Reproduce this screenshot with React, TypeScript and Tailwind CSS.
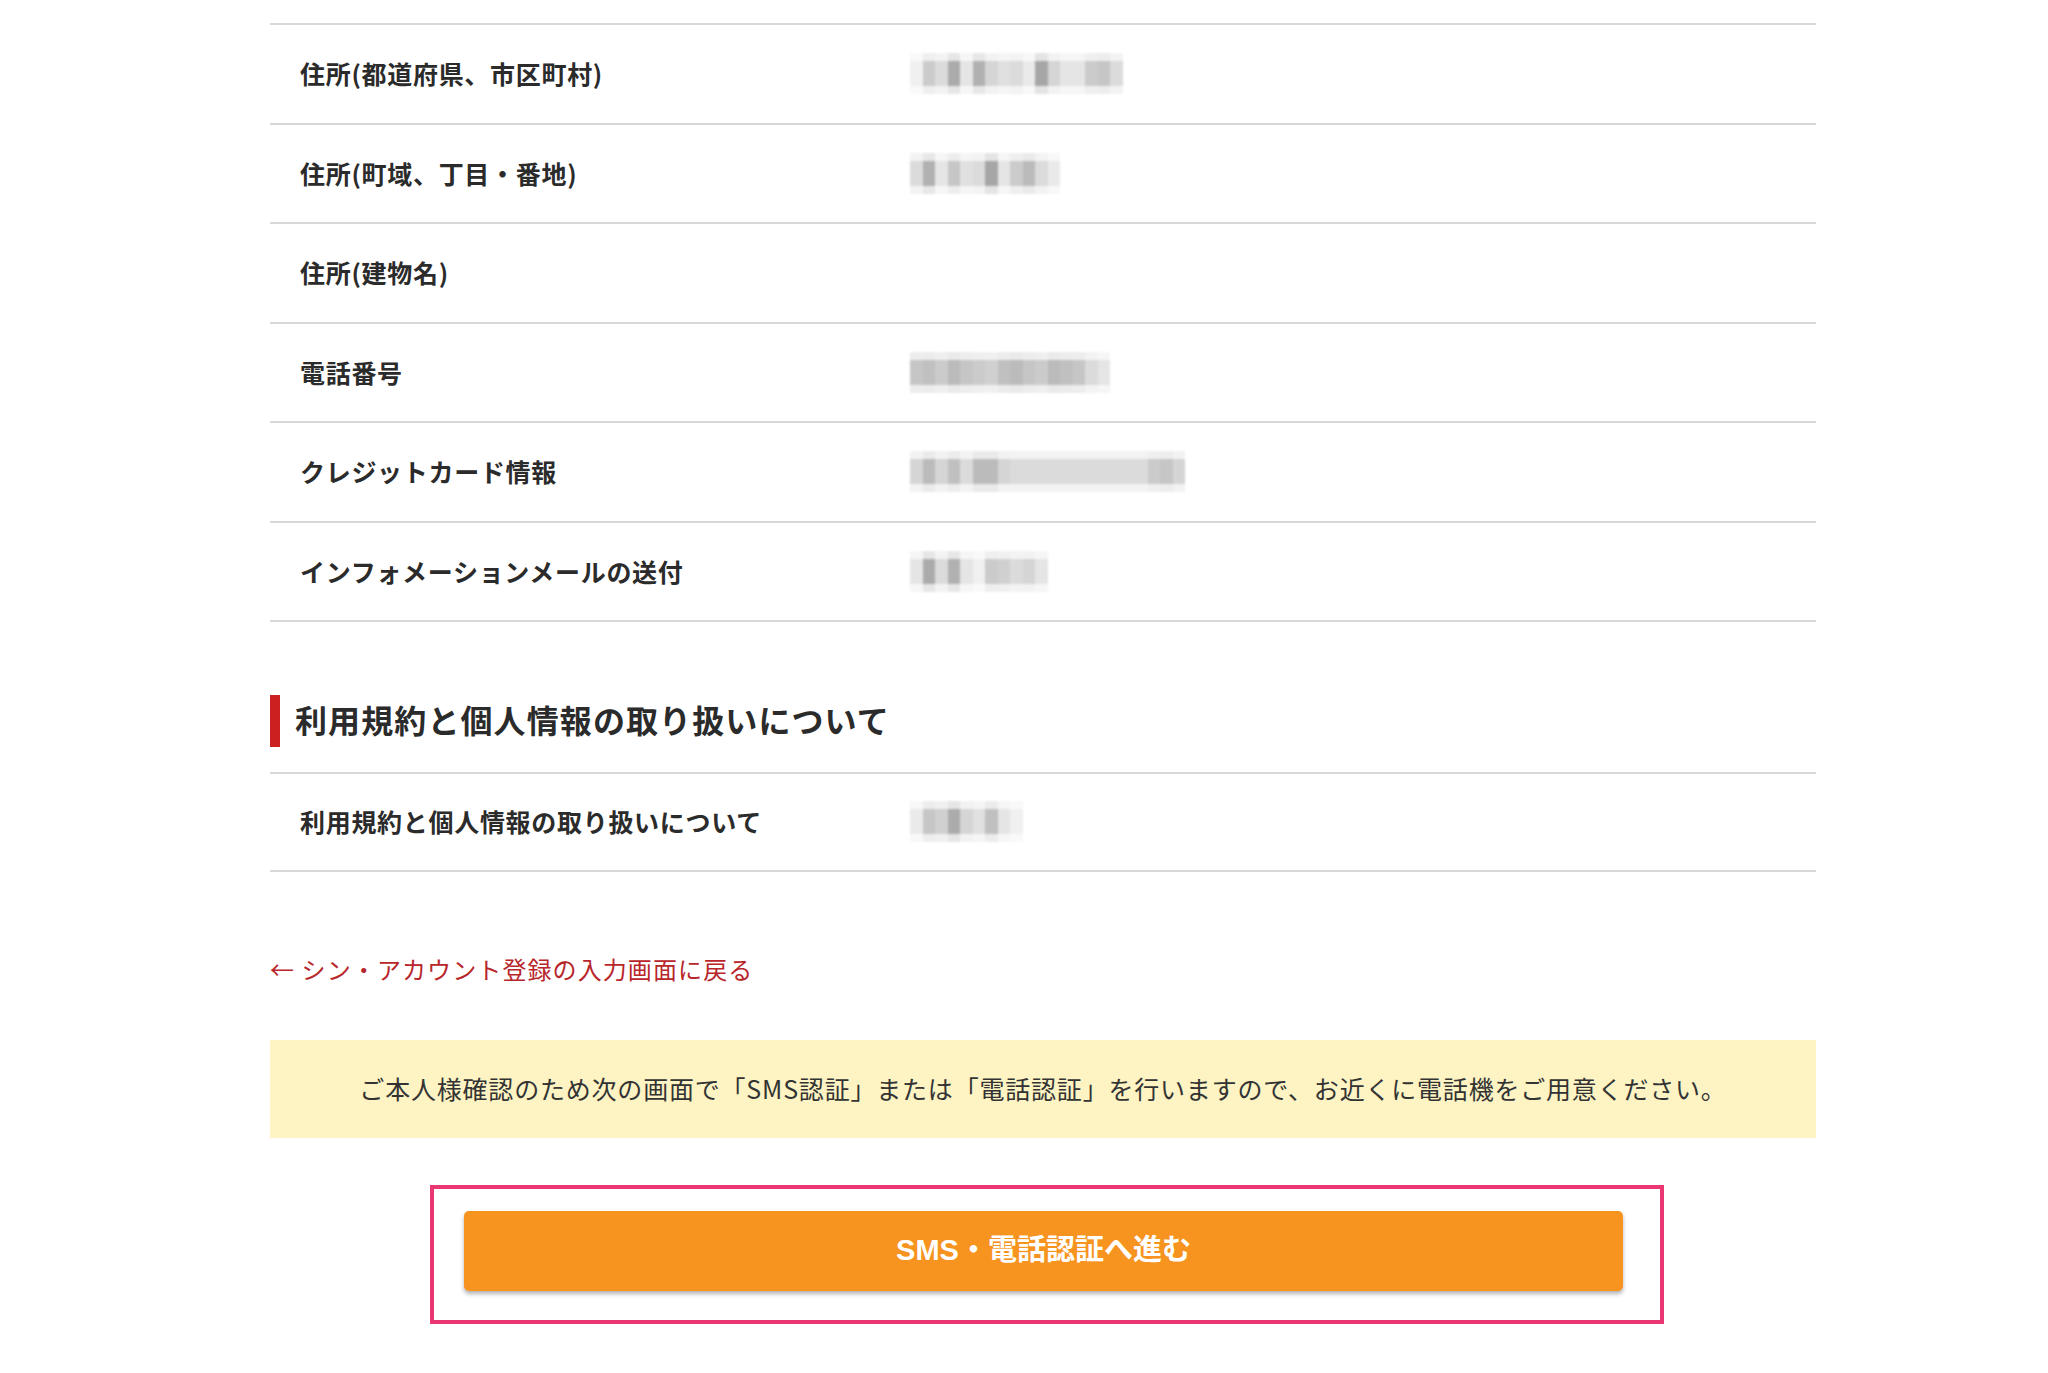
import React from 'react';

const rows: { label: string; cells: number[] }[] = [
  { label: '住所(都道府県、市区町村)', cells: [0.1, 0.45, 0.3, 0.75, 0.2, 0.7, 0.35, 0.25, 0.3, 0.15, 0.8, 0.35, 0.2, 0.2, 0.45, 0.5, 0.3] },
  { label: '住所(町域、丁目・番地)', cells: [0.3, 0.7, 0.2, 0.5, 0.25, 0.3, 0.8, 0.2, 0.45, 0.6, 0.3, 0.15] },
  { label: '住所(建物名)', cells: [] },
  { label: '電話番号', cells: [0.5, 0.55, 0.45, 0.6, 0.5, 0.45, 0.4, 0.55, 0.6, 0.5, 0.45, 0.6, 0.55, 0.5, 0.3, 0.2] },
  { label: 'クレジットカード情報', cells: [0.35, 0.6, 0.35, 0.55, 0.3, 0.6, 0.6, 0.35, 0.3, 0.3, 0.3, 0.3, 0.3, 0.3, 0.3, 0.3, 0.3, 0.3, 0.3, 0.45, 0.5, 0.35] },
  { label: 'インフォメーションメールの送付', cells: [0.2, 0.75, 0.3, 0.7, 0.2, 0.1, 0.45, 0.4, 0.3, 0.35, 0.2] },
];

function Mosaic({ cells }: { cells: number[] }) {
  return (
    <div className="flex blur-[1px]">
      {cells.map((d, i) => {
        const mid = Math.round(250 - d * 105);
        const edge = Math.round(252 - d * 30);
        return (
          <div key={i} className="flex w-[12.5px] flex-col">
            <div className="h-[8px]" style={{ backgroundColor: `rgb(${edge},${edge},${edge})` }} />
            <div className="h-[25px]" style={{ backgroundColor: `rgb(${mid},${mid},${mid})` }} />
            <div className="h-[8px]" style={{ backgroundColor: `rgb(${edge},${edge},${edge})` }} />
          </div>
        );
      })}
    </div>
  );
}

function Row({ label, cells, topBorder }: { label: string; cells: number[]; topBorder?: boolean }) {
  return (
    <div
      className={
        'flex h-[99.5px] items-center border-b-2 border-[#d8d8d8]' + (topBorder ? ' border-t-2' : '')
      }
    >
      <div className="w-[640px] pl-[30px] text-[25px] font-bold tracking-[0.7px] text-[#2b2b2b]">{label}</div>
      <Mosaic cells={cells} />
    </div>
  );
}

export default function App() {
  return (
    <div
      className="min-h-[1373px] w-full bg-white"
      style={{ fontFamily: '"Noto Sans CJK JP", "Noto Sans", sans-serif' }}
    >
      <div className="ml-[270px] w-[1546px]">
        {/* 上の行の区切り線 */}
        <div className="h-[25px] border-b-2 border-[#d8d8d8]" />

        {rows.map((r) => (
          <Row key={r.label} label={r.label} cells={r.cells} />
        ))}

        {/* 見出し */}
        <div className="mt-[73px] flex h-[52px] items-center">
          <div className="h-full w-[10px] bg-[#cc1f1f]" />
          <h2 className="pb-[5px] pl-[15px] text-[32px] font-bold tracking-[1.1px] text-[#2b2b2b]">
            利用規約と個人情報の取り扱いについて
          </h2>
        </div>

        <div className="mt-[25px]">
          <Row
            label="利用規約と個人情報の取り扱いについて"
            cells={[0.15, 0.5, 0.4, 0.75, 0.35, 0.25, 0.55, 0.2, 0.1]}
            topBorder
          />
        </div>

        <a className="mt-[81px] block w-fit text-[24px] leading-[32px] tracking-[1.1px] text-[#b8262b]">
          ← シン・アカウント登録の入力画面に戻る
        </a>

        <div className="mt-[55px] flex h-[98px] items-center justify-center bg-[#fdf3c3]">
          <p className="text-[25px] tracking-[0.8px] text-[#333333]">
            ご本人様確認のため次の画面で「SMS認証」または「電話認証」を行いますので、お近くに電話機をご用意ください。
          </p>
        </div>

        <div className="ml-[160px] mt-[47px] h-[139px] w-[1234px] border-4 border-[#ea3671] pl-[30px] pt-[22px]">
          <button
            className="flex h-[80px] w-[1159px] items-center justify-center rounded-[5px] bg-[#f7931f] text-[29px] font-bold text-white shadow-[0_3px_4px_rgba(0,0,0,0.3)]"
            style={{ fontFamily: '"Liberation Sans", "Noto Sans CJK JP", sans-serif' }}
          >
            SMS・電話認証へ進む
          </button>
        </div>
      </div>
    </div>
  );
}
